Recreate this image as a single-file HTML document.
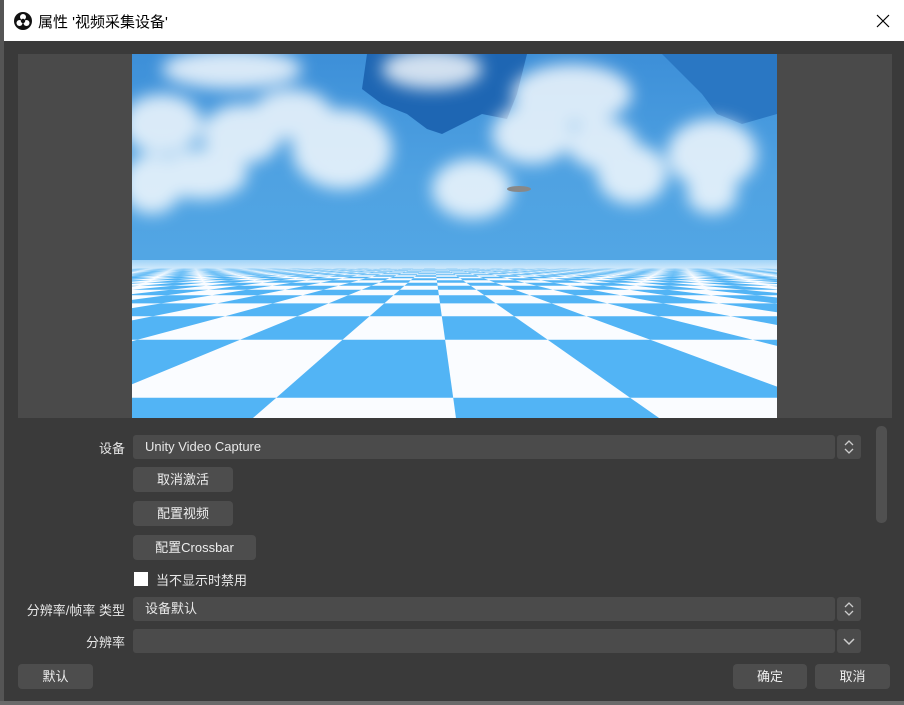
<!DOCTYPE html>
<html><head><meta charset="utf-8"><style>
*{margin:0;padding:0;box-sizing:border-box}
body{width:904px;height:705px;overflow:hidden;background:#3a3a3a;font-family:"Liberation Sans","Noto Sans CJK SC",sans-serif;position:relative;color:#e8e8e8;font-size:13px}
.a{position:absolute}
.title{left:4px;top:0;width:900px;height:41px;background:#fff;color:#000;font-size:15px}
.lbl{text-align:right;width:120px;left:5px;font-size:13px;color:#e6e6e6}
.combo{left:133px;width:702px;height:24px;background:#4b4b4b;border-radius:3px;padding-left:12px;line-height:24px}
.arr{left:837px;width:24px;height:24px;background:#4b4b4b;border-radius:3px}
.btn{background:#4d4d4d;border-radius:4px;height:25px;line-height:25px;text-align:center;color:#eee}
</style></head><body>
<div class="a" style="left:0;top:0;width:4px;height:705px;background:#555"></div>
<div class="a title">
 <svg class="a" style="left:10px;top:12px" width="18" height="18" viewBox="0 0 18 18"><circle cx="9" cy="9" r="9" fill="#111"/><circle cx="9" cy="5" r="3" fill="#fff"/><circle cx="5.5" cy="11" r="3" fill="#fff"/><circle cx="12.5" cy="11" r="3" fill="#fff"/><circle cx="9" cy="9" r="2.2" fill="#111"/></svg>
 <div class="a" style="left:34px;top:11px">属性 '视频采集设备'</div>
 <svg class="a" style="left:872px;top:14px" width="14" height="14"><path d="M1 1 L13 13 M13 1 L1 13" stroke="#000" stroke-width="1.2"/></svg>
</div>
<div class="a" style="left:18px;top:54px;width:874px;height:364px;background:#4a4a4a"></div>
<svg class="a" id="pv" style="left:132px;top:54px" width="645" height="364" viewBox="0 0 645 364">
<defs><linearGradient id="sk" x1="0" y1="0" x2="0" y2="1"><stop offset="0" stop-color="#3d8fd8"/><stop offset="0.6" stop-color="#4fa2e2"/><stop offset="1" stop-color="#52a6e4"/></linearGradient>
<linearGradient id="hz" x1="0" y1="0" x2="0" y2="1"><stop offset="0" stop-color="#9fd3f7" stop-opacity="1"/><stop offset="1" stop-color="#9fd3f7" stop-opacity="0"/></linearGradient>
<filter id="bl"><feGaussianBlur stdDeviation="8"/></filter></defs>
<rect width="645" height="206" fill="url(#sk)"/>
<path d="M235 0 L395 0 L385 40 L375 65 L350 60 L330 70 L310 80 L295 75 L275 60 L250 50 L230 35 Z" fill="#1e66b3"/>
<path d="M530 0 L645 0 L645 60 L610 70 L585 60 L570 40 Z" fill="#2a77c3"/>
<g fill="#fff" filter="url(#bl)" opacity="0.8">
<ellipse cx="100" cy="15" rx="70" ry="20"/><ellipse cx="30" cy="70" rx="40" ry="30"/><ellipse cx="110" cy="80" rx="40" ry="30"/>
<ellipse cx="210" cy="95" rx="50" ry="40"/><ellipse cx="20" cy="130" rx="30" ry="30"/><ellipse cx="340" cy="135" rx="40" ry="30"/>
<ellipse cx="440" cy="40" rx="60" ry="30"/><ellipse cx="400" cy="80" rx="40" ry="30"/><ellipse cx="500" cy="120" rx="35" ry="30"/>
<ellipse cx="580" cy="100" rx="45" ry="35"/><ellipse cx="580" cy="140" rx="25" ry="20"/><ellipse cx="300" cy="15" rx="50" ry="20"/>
<ellipse cx="160" cy="60" rx="40" ry="25"/><ellipse cx="70" cy="120" rx="45" ry="25"/><ellipse cx="470" cy="90" rx="35" ry="25"/></g>
<ellipse cx="387" cy="135" rx="12" ry="3" fill="#888"/>
<g id="fl"></g>
</svg>
<script>
(function(){var g=document.getElementById('fl'),s='',K=190,H=206,VP=302;
function Y(z){return H+K/z}function X(xb,z){return VP+(xb-VP)*(K/z)/158}
var zs=[1.2];for(var n=0;n<22;n++)zs.push(1.38+n);
for(var r=0;r<zs.length-1;r++){var za=zs[r],zb=zs[r+1],row=r-1;
for(var k=-40;k<40;k++){if(((k+row)%2+2)%2==0)continue;var x0=324+203*k,x1=x0+203;
s+='<polygon points="'+X(x0,za).toFixed(1)+','+Y(za).toFixed(1)+' '+X(x1,za).toFixed(1)+','+Y(za).toFixed(1)+' '+X(x1,zb).toFixed(1)+','+Y(zb).toFixed(1)+' '+X(x0,zb).toFixed(1)+','+Y(zb).toFixed(1)+'"/>';}}
g.innerHTML='<rect x="0" y="'+H+'" width="645" height="158" fill="#fafcff"/><g fill="#52b4f5">'+s+'</g><rect x="0" y="'+H+'" width="645" height="16" fill="url(#hz)"/>';})();
</script>
<div class="a lbl" style="top:438px">设备</div>
<div class="a combo" style="top:435px">Unity Video Capture</div>
<div class="a arr" style="top:435px"><svg width="24" height="24"><path d="M8 10 L12 6 L16 10 M8 14 L12 18 L16 14" stroke="#ccc" fill="none" stroke-width="1.3"/></svg></div>
<div class="a btn" style="left:133px;top:467px;width:100px">取消激活</div>
<div class="a btn" style="left:133px;top:501px;width:100px">配置视频</div>
<div class="a btn" style="left:133px;top:535px;width:123px">配置Crossbar</div>
<div class="a" style="left:134px;top:572px;width:14px;height:14px;background:#fff"></div>
<div class="a" style="left:156px;top:570px">当不显示时禁用</div>
<div class="a lbl" style="top:600px">分辨率/帧率 类型</div>
<div class="a combo" style="top:597px">设备默认</div>
<div class="a arr" style="top:597px"><svg width="24" height="24"><path d="M8 10 L12 6 L16 10 M8 14 L12 18 L16 14" stroke="#ccc" fill="none" stroke-width="1.3"/></svg></div>
<div class="a lbl" style="top:632px">分辨率</div>
<div class="a combo" style="top:629px"></div>
<div class="a arr" style="top:629px"><svg width="24" height="24"><path d="M7 10 L12 15 L17 10" stroke="#ccc" fill="none" stroke-width="1.5"/></svg></div>
<div class="a" style="left:876px;top:426px;width:11px;height:97px;background:#505050;border-radius:5px"></div>
<div class="a btn" style="left:18px;top:664px;width:75px">默认</div>
<div class="a btn" style="left:733px;top:664px;width:74px">确定</div>
<div class="a btn" style="left:815px;top:664px;width:75px">取消</div>
<div class="a" style="left:0;top:701px;width:904px;height:4px;background:#6a6a6a"></div>
</body></html>
